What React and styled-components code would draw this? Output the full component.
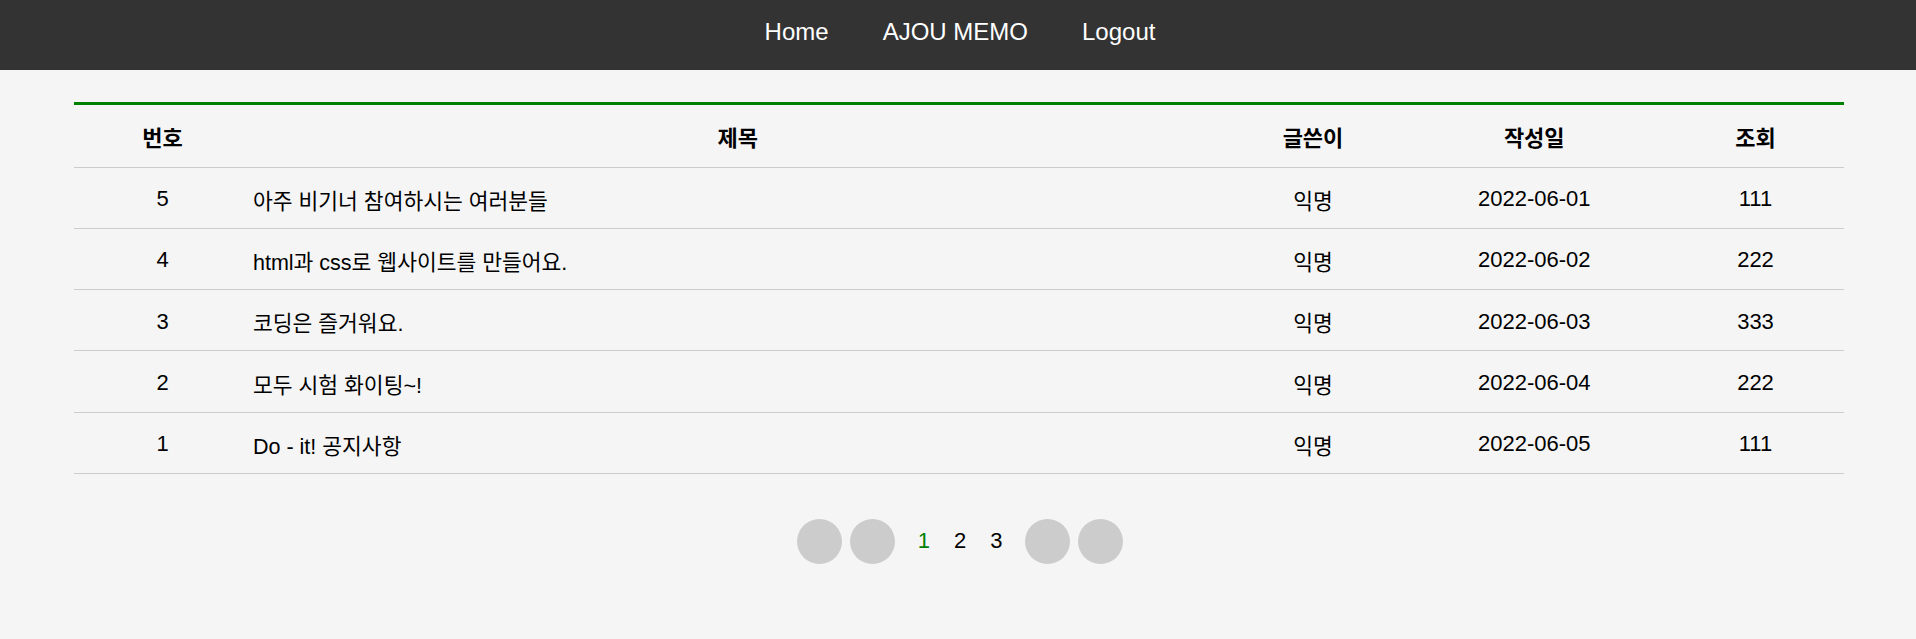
import React from 'react';
import styled, { createGlobalStyle } from 'styled-components';

const GlobalStyle = createGlobalStyle`
  body {
    margin: 0;
    background: #f5f5f5;
    font-family: "Liberation Sans", "Noto Sans CJK KR", sans-serif;
  }
`

const Header = styled.header`height: 70px; box-sizing: border-box; padding: 18px 0 0 4px; background: #333;`
const Menu = styled.ul`display: flex; justify-content: center; gap: 54px; margin: 0; padding: 0; list-style: none;`
const MenuItem = styled.li`font-size: 24px; line-height: 28px; color: #fff; cursor: pointer;`

const Main = styled.main`padding: 32px 72px 0 74px;`
const Board = styled.table`width: 100%; border-collapse: collapse; border-top: 3px solid #008000; font-size: 21.5px; color: #000;`
const Th = styled.th`height: 61.5px; padding: 0; font-size: 22px; font-weight: bold; text-align: center; border-bottom: 1px solid #ccc; width: ${p => p.$w};`
const Td = styled.td`
  height: 61.3px; box-sizing: border-box; padding: 3px 0 0 ${p => (p.$left ? '2px' : '0')};
  font-size: ${p => (p.$num ? '22px' : 'inherit')};
  text-align: ${p => (p.$left ? 'left' : 'center')};
  border-bottom: 1px solid #ccc;
`

const Pager = styled.div`display: flex; justify-content: center; align-items: center; gap: 8px; margin-top: 45px; padding-left: 2px;`
const Circle = styled.span`display: block; width: 45px; height: 45px; border-radius: 50%; background: #ccc; cursor: pointer;`
const Pages = styled.div`display: flex; margin: 0 7px; gap: 8px;`
const PageNum = styled.a`padding: 0 8px; font-size: 22px; color: ${p => (p.$active ? '#008000' : '#000')}; cursor: pointer;`

const posts = [
    { no: 5, title: '아주 비기너 참여하시는 여러분들', date: '2022-06-01', views: 111 },
    { no: 4, title: 'html과 css로 웹사이트를 만들어요.', date: '2022-06-02', views: 222 },
    { no: 3, title: '코딩은 즐거워요.', date: '2022-06-03', views: 333 },
    { no: 2, title: '모두 시험 화이팅~!', date: '2022-06-04', views: 222 },
    { no: 1, title: 'Do - it! 공지사항', date: '2022-06-05', views: 111 },
]

const App = () => {
    return (
        <>
            <GlobalStyle />
            <Header>
                <Menu>
                    <MenuItem>Home</MenuItem>
                    <MenuItem>AJOU MEMO</MenuItem>
                    <MenuItem>Logout</MenuItem>
                </Menu>
            </Header>
            <Main>
                <Board>
                    <thead>
                        <tr>
                            <Th $w='10%'>번호</Th>
                            <Th $w='55%'>제목</Th>
                            <Th $w='10%'>글쓴이</Th>
                            <Th $w='15%'>작성일</Th>
                            <Th $w='10%'>조회</Th>
                        </tr>
                    </thead>
                    <tbody>
                        {posts.map(post => (
                            <tr key={post.no}>
                                <Td $num>{post.no}</Td>
                                <Td $left>{post.title}</Td>
                                <Td>익명</Td>
                                <Td $num>{post.date}</Td>
                                <Td $num>{post.views}</Td>
                            </tr>
                        ))}
                    </tbody>
                </Board>
                <Pager>
                    <Circle />
                    <Circle />
                    <Pages>
                        <PageNum $active>1</PageNum>
                        <PageNum>2</PageNum>
                        <PageNum>3</PageNum>
                    </Pages>
                    <Circle />
                    <Circle />
                </Pager>
            </Main>
        </>
    )
}

export default App;
